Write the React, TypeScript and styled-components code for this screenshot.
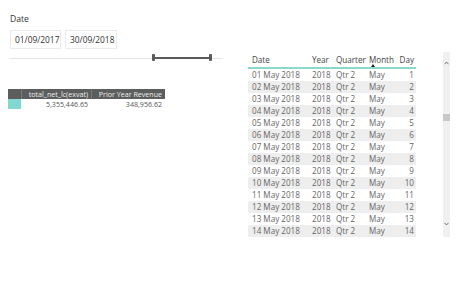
import React from "react";
import styled, { createGlobalStyle } from "styled-components";

const Global = createGlobalStyle`
  html, body { margin: 0; padding: 0; background: #fff; }
  body { font-family: "Segoe UI", "Open Sans", "Noto Sans", sans-serif; color: #333; }
  * { box-sizing: border-box; }
`;

const Page = styled.div`
  width: 474px;
  height: 288px;
  display: flex;
  align-items: flex-start;
`;

const LeftCol = styled.div`
  width: 248px;
  padding: 13px 0 0 0;
  display: flex;
  flex-direction: column;
`;

const Slicer = styled.div`
  padding-left: 10px;
  display: flex;
  flex-direction: column;
`;

const SlicerTitle = styled.div`
  font-size: 8.6px;
  line-height: 12px;
  color: #333;
`;

const DateRow = styled.div`
  display: flex;
  gap: 4px;
  margin-top: 5px;
`;

const DateBox = styled.div<{ $w: number }>`
  width: ${(p) => p.$w}px;
  height: 19px;
  border: 1px solid #ebebeb;
  font-size: 8.4px;
  line-height: 17px;
  padding-left: 4px;
  color: #333;
  white-space: nowrap;
`;

const Track = styled.div`
  position: relative;
  width: 212px;
  height: 1px;
  background: #e4e4e4;
  margin-top: 9px;
`;

const Range = styled.div<{ $l: number; $w: number }>`
  position: absolute;
  left: ${(p) => p.$l}px;
  width: ${(p) => p.$w}px;
  top: -1px;
  height: 2px;
  background: #5a5a5a;
`;

const Handle = styled.div<{ $l: number }>`
  position: absolute;
  left: ${(p) => p.$l}px;
  top: -4px;
  width: 3px;
  height: 7px;
  border-radius: 1px;
  background: #5a5a5a;
`;

const Matrix = styled.div`
  margin: 30px 0 0 8px;
  display: grid;
  grid-template-columns: 13px 70px 74px;
  font-size: 7.1px;
`;

const MHead = styled.div<{ $div?: boolean }>`
  height: 10px;
  line-height: 10px;
  background: #5c5d5d;
  color: #eee;
  text-align: right;
  padding-right: 3px;
  white-space: nowrap;
  border-left: ${(p) => (p.$div ? "1px solid #7a7a7a" : "none")};
`;

const MCell = styled.div<{ $teal?: boolean }>`
  height: 10px;
  line-height: 10px;
  background: ${(p) => (p.$teal ? "#82d8cf" : "transparent")};
  color: #555;
  text-align: right;
  padding-right: 3px;
  white-space: nowrap;
`;

const RightCol = styled.div`
  margin-top: 50px;
  display: flex;
  align-items: flex-start;
`;

const Table = styled.div`
  width: 168px;
  font-size: 8.1px;
`;

const cols = "60px 24px 33px 30px 21px";

const HeadRow = styled.div`
  display: grid;
  grid-template-columns: ${cols};
  height: 19px;
  border-bottom: 2px solid #8ad9ce;
  color: #444;
`;

const HeadCell = styled.div<{ $right?: boolean }>`
  position: relative;
  padding: 4px ${(p) => (p.$right ? "2px" : "0")} 0 4px;
  text-align: ${(p) => (p.$right ? "right" : "left")};
  line-height: 11px;
  white-space: nowrap;
`;

const SortArrow = styled.span`
  position: absolute;
  left: 6px;
  top: 14px;
  width: 0;
  height: 0;
  border-left: 2.5px solid transparent;
  border-right: 2.5px solid transparent;
  border-bottom: 3px solid #222;
`;

const Row = styled.div<{ $alt: boolean }>`
  display: grid;
  grid-template-columns: ${cols};
  height: 12px;
  line-height: 12px;
  background: ${(p) => (p.$alt ? "#eeeeee" : "#fff")};
  color: #666;
`;

const Cell = styled.div<{ $right?: boolean }>`
  padding: 0 ${(p) => (p.$right ? "2px" : "0")} 0 4px;
  text-align: ${(p) => (p.$right ? "right" : "left")};
  white-space: nowrap;
`;

const Scrollbar = styled.div`
  margin-left: 27px;
  margin-top: 2px;
  width: 7px;
  height: 185px;
  background: #f0f0f0;
  display: flex;
  flex-direction: column;
  align-items: center;
`;

const Arrow = styled.div<{ $bottom?: boolean }>`
  height: 12px;
  display: flex;
  align-items: center;
  justify-content: center;
  margin-top: ${(p) => (p.$bottom ? "0" : "5px")};
  margin-bottom: ${(p) => (p.$bottom ? "7px" : "0")};
`;

const Thumb = styled.div`
  width: 7px;
  height: 7px;
  background: #c8c8c8;
  margin-top: 45px;
`;

const Spacer = styled.div`
  flex: 1;
`;

const rows = Array.from({ length: 14 }, (_, i) => i + 1);

export default function App() {
  return (
    <Page>
      <Global />
      <LeftCol>
        <Slicer>
          <SlicerTitle>Date</SlicerTitle>
          <DateRow>
            <DateBox $w={51}>01/09/2017</DateBox>
            <DateBox $w={52}>30/09/2018</DateBox>
          </DateRow>
          <Track>
            <Range $l={142} $w={59} />
            <Handle $l={142} />
            <Handle $l={199} />
          </Track>
        </Slicer>
        <Matrix>
          <MHead />
          <MHead $div>total_net_lc(exvat)</MHead>
          <MHead $div>Prior Year Revenue</MHead>
          <MCell $teal />
          <MCell>5,355,446.65</MCell>
          <MCell>348,956.62</MCell>
        </Matrix>
      </LeftCol>
      <RightCol>
        <Table>
          <HeadRow>
            <HeadCell>Date</HeadCell>
            <HeadCell>Year</HeadCell>
            <HeadCell>Quarter</HeadCell>
            <HeadCell>
              Month
              <SortArrow />
            </HeadCell>
            <HeadCell $right>Day</HeadCell>
          </HeadRow>
          {rows.map((d) => (
            <Row key={d} $alt={d % 2 === 0}>
              <Cell>{`${String(d).padStart(2, "0")} May 2018`}</Cell>
              <Cell>2018</Cell>
              <Cell>Qtr 2</Cell>
              <Cell>May</Cell>
              <Cell $right>{d}</Cell>
            </Row>
          ))}
        </Table>
        <Scrollbar>
          <Arrow>
            <svg width="5" height="4" viewBox="0 0 5 4">
              <path d="M0.5 3.2 L2.5 1 L4.5 3.2" fill="none" stroke="#666" strokeWidth="0.9" />
            </svg>
          </Arrow>
          <Thumb />
          <Spacer />
          <Arrow $bottom>
            <svg width="5" height="4" viewBox="0 0 5 4">
              <path d="M0.5 0.8 L2.5 3 L4.5 0.8" fill="none" stroke="#666" strokeWidth="0.9" />
            </svg>
          </Arrow>
        </Scrollbar>
      </RightCol>
    </Page>
  );
}
